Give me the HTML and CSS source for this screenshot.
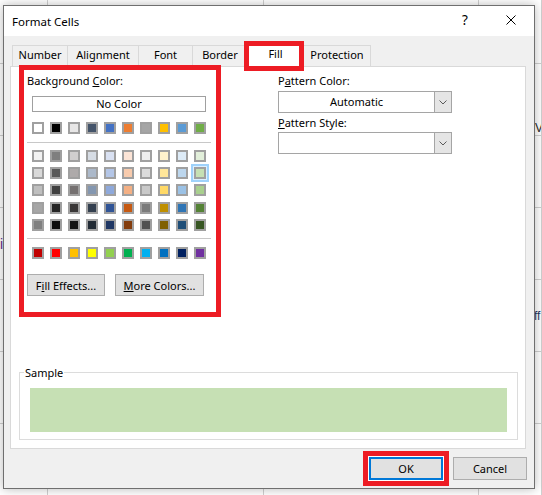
FILE: index.html
```html
<!DOCTYPE html>
<html lang="en">
<head>
<meta charset="utf-8">
<title>Format Cells</title>
<link rel="stylesheet" href="styles.css">
</head>
<body>
<div class="sheet">
  <div class="cell"></div><div class="cell"></div><div class="cell"></div><div class="cell"></div>
  <div class="cell"></div><div class="cell"></div><div class="cell"></div><div class="cell c-v"><span class="txt-v">V</span></div>
  <div class="cell"></div><div class="cell"></div><div class="cell"></div><div class="cell"></div>
  <div class="cell c-i"><span class="txt-i">i</span></div><div class="cell"></div><div class="cell"></div><div class="cell"></div>
  <div class="cell"></div><div class="cell"></div><div class="cell"></div><div class="cell c-ff"><span class="txt-ff">ff</span></div>
  <div class="cell"></div><div class="cell"></div><div class="cell"></div><div class="cell"></div>
  <div class="cell"></div><div class="cell"></div><div class="cell"></div><div class="cell"></div>
</div>

<div class="dialog">
  <div class="titlebar">
    <span class="title">Format Cells</span>
    <span class="tb-btn help">?</span>
    <span class="tb-btn close"><svg width="10" height="10" viewBox="0 0 10 10"><path d="M0.5 0.5 L9.5 9.5 M9.5 0.5 L0.5 9.5" stroke="#000" stroke-width="1" fill="none"/></svg></span>
  </div>
  <div class="body">
    <div class="tabs">
      <div class="tab t-number">Number</div>
      <div class="tab t-align">Alignment</div>
      <div class="tab t-font">Font</div>
      <div class="tab t-border">Border</div>
      <div class="tab t-fill sel">Fill</div>
      <div class="tab t-prot">Protection</div>
    </div>
    <div class="panel">
      <div class="top">
        <div class="bg-col">
          <div class="label">Background <u>C</u>olor:</div>
          <div class="nocolor">No Color</div>
          <div class="sw-row r1">
            <div class="sw" style="background:#ffffff"></div>
            <div class="sw" style="background:#000000"></div>
            <div class="sw" style="background:#e7e6e6"></div>
            <div class="sw" style="background:#44546a"></div>
            <div class="sw" style="background:#4472c4"></div>
            <div class="sw" style="background:#ed7d31"></div>
            <div class="sw" style="background:#a5a5a5"></div>
            <div class="sw" style="background:#ffc000"></div>
            <div class="sw" style="background:#5b9bd5"></div>
            <div class="sw" style="background:#70ad47"></div>
          </div>
          <div class="sep"></div>
          <div class="sw-row theme">
            <div class="sw" style="background:#f2f2f2"></div>
            <div class="sw" style="background:#7f7f7f"></div>
            <div class="sw" style="background:#d0cece"></div>
            <div class="sw" style="background:#d6dce4"></div>
            <div class="sw" style="background:#d9e1f2"></div>
            <div class="sw" style="background:#fce4d6"></div>
            <div class="sw" style="background:#ededed"></div>
            <div class="sw" style="background:#fff2cc"></div>
            <div class="sw" style="background:#ddebf7"></div>
            <div class="sw" style="background:#e2efda"></div>

            <div class="sw" style="background:#d9d9d9"></div>
            <div class="sw" style="background:#595959"></div>
            <div class="sw" style="background:#aeaaaa"></div>
            <div class="sw" style="background:#acb9ca"></div>
            <div class="sw" style="background:#b4c6e7"></div>
            <div class="sw" style="background:#f8cbad"></div>
            <div class="sw" style="background:#dbdbdb"></div>
            <div class="sw" style="background:#ffe699"></div>
            <div class="sw" style="background:#bdd7ee"></div>
            <div class="sw sel" style="background:#c6e0b4"></div>

            <div class="sw" style="background:#bfbfbf"></div>
            <div class="sw" style="background:#404040"></div>
            <div class="sw" style="background:#757171"></div>
            <div class="sw" style="background:#8497b0"></div>
            <div class="sw" style="background:#8ea9db"></div>
            <div class="sw" style="background:#f4b084"></div>
            <div class="sw" style="background:#c9c9c9"></div>
            <div class="sw" style="background:#ffd966"></div>
            <div class="sw" style="background:#9bc2e6"></div>
            <div class="sw" style="background:#a9d08e"></div>

            <div class="sw" style="background:#a6a6a6"></div>
            <div class="sw" style="background:#262626"></div>
            <div class="sw" style="background:#3a3838"></div>
            <div class="sw" style="background:#333f4f"></div>
            <div class="sw" style="background:#305496"></div>
            <div class="sw" style="background:#c65911"></div>
            <div class="sw" style="background:#7b7b7b"></div>
            <div class="sw" style="background:#bf8f00"></div>
            <div class="sw" style="background:#2f75b5"></div>
            <div class="sw" style="background:#548235"></div>

            <div class="sw" style="background:#808080"></div>
            <div class="sw" style="background:#0d0d0d"></div>
            <div class="sw" style="background:#161616"></div>
            <div class="sw" style="background:#222b35"></div>
            <div class="sw" style="background:#203764"></div>
            <div class="sw" style="background:#833c0c"></div>
            <div class="sw" style="background:#525252"></div>
            <div class="sw" style="background:#806000"></div>
            <div class="sw" style="background:#1f4e78"></div>
            <div class="sw" style="background:#375623"></div>
          </div>
          <div class="sep sep2"></div>
          <div class="sw-row std">
            <div class="sw" style="background:#c00000"></div>
            <div class="sw" style="background:#ff0000"></div>
            <div class="sw" style="background:#ffc000"></div>
            <div class="sw" style="background:#ffff00"></div>
            <div class="sw" style="background:#92d050"></div>
            <div class="sw" style="background:#00b050"></div>
            <div class="sw" style="background:#00b0f0"></div>
            <div class="sw" style="background:#0070c0"></div>
            <div class="sw" style="background:#002060"></div>
            <div class="sw" style="background:#7030a0"></div>
          </div>
          <div class="btnrow">
            <button class="wbtn b-effects">F<u>i</u>ll Effects...</button>
            <button class="wbtn b-more"><u>M</u>ore Colors...</button>
          </div>
        </div>
        <div class="pat-col">
          <div class="label">P<u>a</u>ttern Color:</div>
          <div class="combo">
            <div class="combo-val">Automatic</div>
            <div class="combo-btn"><svg width="8" height="5" viewBox="0 0 8 5"><path d="M0.5 0.5 L4 4 L7.5 0.5" stroke="#5a5a5a" stroke-width="1" fill="none"/></svg></div>
          </div>
          <div class="label l2"><u>P</u>attern Style:</div>
          <div class="combo c2">
            <div class="combo-val"></div>
            <div class="combo-btn"><svg width="8" height="5" viewBox="0 0 8 5"><path d="M0.5 0.5 L4 4 L7.5 0.5" stroke="#5a5a5a" stroke-width="1" fill="none"/></svg></div>
          </div>
        </div>
      </div>
      <fieldset class="sample">
        <legend>Sample</legend>
        <div class="sample-fill"></div>
      </fieldset>
    </div>
    <div class="actions">
      <button class="abtn ok">OK</button>
      <button class="abtn">Cancel</button>
    </div>
  </div>
</div>

<div class="mark mark-fill"></div>
<div class="mark mark-bg"></div>
<div class="mark mark-ok"></div>
</body>
</html>
```

FILE: styles.css
```css
* { box-sizing: border-box; }
html, body { margin: 0; padding: 0; }
body {
  width: 542px;
  height: 495px;
  overflow: hidden;
  position: relative;
  background: #ffffff;
  font-family: "Noto Sans", "Open Sans", sans-serif;
  font-size: 11px;
  color: #000;
}

/* spreadsheet behind the dialog */
.sheet {
  display: grid;
  grid-template-columns: 48px 216px 215px 63px;
  grid-template-rows: 64px repeat(6, 72px);
}
.cell {
  border-right: 1px solid #d0d0d0;
  border-bottom: 1px solid #d0d0d0;
  display: flex;
  align-items: center;
  overflow: hidden;
  white-space: nowrap;
  font-family: "Liberation Sans", Arial, sans-serif;
  font-size: 12px;
}
.c-i { padding-left: 0; color: #6a2d8f; font-size: 14px; }
.c-v { align-items: flex-end; padding-left: 56px; color: #2b2b2b; }
.txt-v { line-height: 13px; }
.c-ff { padding-left: 55px; color: #1f3864; }

/* dialog window */
.dialog {
  position: absolute;
  left: 3px;
  top: 5px;
  width: 532px;
  height: 484px;
  border: 1px solid #6f6f6f;
  background: #f0f0f0;
  box-shadow: 0 0 10px rgba(0, 0, 0, 0.28);
  display: flex;
  flex-direction: column;
}
.titlebar {
  flex: none;
  height: 30px;
  background: #fff;
  display: flex;
  align-items: center;
  padding-left: 8px;
}
.title { font-size: 11.5px; }
.tb-btn {
  width: 46px;
  height: 30px;
  display: flex;
  align-items: center;
  justify-content: center;
}
.help { margin-left: auto; font-size: 13.5px; padding-bottom: 2px; }
.close svg { margin-bottom: 2px; }

.body {
  flex: 1;
  padding: 9px 8px 0 6px;
  display: flex;
  flex-direction: column;
}

/* tabs */
.tabs {
  display: flex;
  align-items: flex-end;
  height: 21px;
  margin-left: 2px;
  position: relative;
  z-index: 1;
}
.tab {
  height: 21px;
  border: 1px solid #d9d9d9;
  border-bottom: none;
  margin-left: -1px;
  text-align: center;
  line-height: 18px;
  background: #f0f0f0;
}
.t-number { margin-left: 0; width: 56px; }
.t-align { width: 72px; }
.t-font { width: 55px; }
.t-border { width: 56px; }
.t-fill { width: 57px; }
.t-prot { width: 68px; }
.tab.sel {
  height: 24px;
  margin-bottom: -1px;
  background: #fff;
  line-height: 19px;
}

/* tab page */
.panel {
  flex: none;
  height: 383px;
  background: #fff;
  border: 1px solid #d9d9d9;
  padding: 0 7px 8px 8px;
  display: flex;
  flex-direction: column;
}
.top {
  display: flex;
  padding-top: 6px;
  margin-left: 8px;
}
.bg-col { width: 184px; }
.pat-col { width: 174px; margin-left: 67px; }
.label { height: 15px; line-height: 15px; white-space: nowrap; }
.label u, .wbtn u { text-underline-offset: 1px; }

.nocolor {
  margin: 8px 5px 0;
  height: 16px;
  border: 1px solid #a0a0a0;
  text-align: center;
  line-height: 14px;
}
.sw-row {
  display: grid;
  grid-template-columns: repeat(10, 12px);
  column-gap: 6px;
  margin: 0 5px;
}
.r1 { margin-top: 10px; }
.theme { margin-top: 7px; row-gap: 5.2px; }
.std { margin-top: 8.5px; }
.sw {
  width: 12px;
  height: 12px;
  border: 2px solid #a0a0a0;
}
.sw.sel { box-shadow: 0 0 0 1px #dcefff, 0 0 0 3px #9fd2fb; }
.sep { height: 1px; background: #c8c8c8; margin-top: 8px; }
.sep2 { margin-top: 7px; }

.btnrow { display: flex; gap: 10px; margin-top: 15px; }
.wbtn {
  height: 22px;
  padding: 0;
  background: #e1e1e1;
  border: 1px solid #adadad;
  font: inherit;
  color: #000;
}
.b-effects { width: 78px; }
.b-more { width: 89px; }

.combo {
  margin-top: 3px;
  height: 22px;
  border: 1px solid #a5a5a5;
  display: flex;
  background: #fff;
}
.combo-val { flex: 1; text-align: center; line-height: 20px; }
.combo-btn {
  width: 17px;
  border-left: 1px solid #a5a5a5;
  background: #e5e5e5;
  display: flex;
  align-items: center;
  justify-content: center;
}
.l2 { margin-top: 2px; }
.c2 { margin-top: 2px; }

/* sample group */
.sample {
  margin: auto 0 0;
  padding: 9px 10px 7px;
  border: 1px solid #dcdcdc;
  min-width: 0;
}
.sample legend {
  padding: 0 1px;
  margin-left: -6px;
  line-height: 13px;
}
.sample-fill { height: 44px; background: #c6e0b4; }

/* dialog buttons */
.actions {
  display: flex;
  justify-content: flex-end;
  gap: 10px;
  margin-top: 8px;
  margin-right: -1px;
}
.abtn {
  width: 74px;
  height: 23px;
  padding: 0;
  background: #e1e1e1;
  border: 1px solid #adadad;
  font: inherit;
  color: #000;
}
.abtn.ok { border: 2px solid #0078d7; box-shadow: 0 0 0 1px #fff; }

/* red annotation boxes drawn over the screenshot */
.mark {
  position: absolute;
  z-index: 5;
  border: 5px solid #ed1c24;
  pointer-events: none;
}
.mark-fill { left: 244px; top: 41px; width: 60px; height: 30px; }
.mark-bg { left: 19px; top: 65px; width: 202px; height: 252px; }
.mark-ok { left: 363px; top: 451px; width: 86px; height: 35px; }
```
